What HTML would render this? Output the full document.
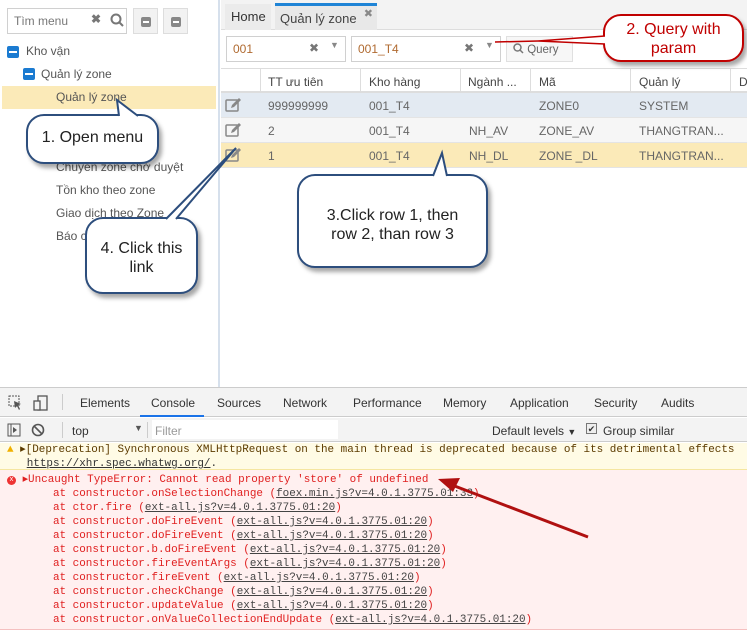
<!DOCTYPE html>
<html><head><meta charset="utf-8">
<style>
*{box-sizing:border-box;margin:0;padding:0}
body{width:747px;height:635px;overflow:hidden;background:#fff;font-family:"Liberation Sans",sans-serif;font-size:12px;color:#444;position:relative}
.abs{position:absolute}
.left{left:0;top:0;width:220px;height:387px;border-right:2px solid #d6e0ec;background:#fff}
.search{left:7px;top:8px;width:120px;height:26px;border:1px solid #d0d0d0;color:#777;padding:5px 6px;font-size:12px}
.sbtn{top:8px;width:25px;height:26px;border:1px solid #ddd;background:#f2f2f2}
.sbtn i{position:absolute;left:7px;top:8px;width:10px;height:10px;background:#888;border-radius:2px}
.sbtn i:after{content:"";position:absolute;left:2px;top:4px;width:6px;height:2px;background:#fff}
.tree{font-size:12px;color:#555}
.minus{width:12px;height:12px;background:#1b7bd1;border-radius:2px}
.minus:after{content:"";position:absolute;left:2px;top:5px;width:8px;height:2px;background:#fff}
.tabs{left:221px;top:0;width:526px;height:30px;background:#f3f3f3;border-bottom:1px solid #ddd}
.tb{left:221px;top:30px;width:526px;height:38px;background:#fff}
.combo{top:36px;height:26px;border:1px solid #d0d0d0;padding:5px 6px;color:#b06a30;font-size:12px}
.grid{left:221px;top:68px;width:526px}
.hdr{height:25px;border-top:1px solid #ddd;border-bottom:2px solid #ddd;position:relative;background:#fff}
.row{height:25px;position:relative;border-bottom:1px solid #e4e4e4;color:#666}
.c{position:absolute;top:6px;white-space:nowrap}
.hd{position:absolute;top:0;height:23px;border-left:1px solid #ddd}
.dev{left:0;top:387px;width:747px;height:248px;background:#fff;border-top:1px solid #ccc}
.mono{font-family:"Liberation Mono",monospace;font-size:10.95px;line-height:14px;white-space:pre}
.err{color:#e02020}
.lnk{text-decoration:underline;color:#444}
.call{position:absolute;background:#fff;border:2px solid #2d4e7d;border-radius:18px;box-shadow:3px 4px 4px rgba(0,0,0,.35);font-size:16px;color:#222;text-align:center}
</style></head><body>

<div class="abs left">
  <div class="abs search">Tìm menu<span style="position:absolute;left:83px;top:3px;color:#777;font-weight:bold">✖</span>
    <svg class="abs" style="left:102px;top:4px" width="14" height="14"><circle cx="6" cy="6" r="4.5" fill="none" stroke="#777" stroke-width="2"/><line x1="9" y1="9" x2="13" y2="13" stroke="#777" stroke-width="2"/></svg></div>
  <div class="abs sbtn" style="left:133px"><i></i></div>
  <div class="abs sbtn" style="left:163px"><i></i></div>
  <div class="abs minus" style="left:7px;top:46px"></div>
  <div class="abs tree" style="left:26px;top:44px">Kho vận</div>
  <div class="abs minus" style="left:23px;top:68px"></div>
  <div class="abs tree" style="left:41px;top:67px">Quản lý zone</div>
  <div class="abs" style="left:2px;top:86px;width:214px;height:23px;background:#fbeab8"></div>
  <div class="abs tree" style="left:56px;top:90px">Quản lý zone</div>
  <div class="abs tree" style="left:56px;top:160px">Chuyển zone chờ duyệt</div>
  <div class="abs tree" style="left:56px;top:183px">Tồn kho theo zone</div>
  <div class="abs tree" style="left:56px;top:206px">Giao dịch theo Zone</div>
  <div class="abs tree" style="left:56px;top:229px">Báo c</div>
</div>

<div class="abs tabs">
  <div class="abs" style="left:4px;top:4px;width:46px;height:26px;background:#ebebeb;padding:5px 6px;font-size:13px;color:#333">Home</div>
  <div class="abs" style="left:54px;top:3px;width:102px;height:27px;background:#e8e8e8;border-top:3px solid #1f84d6;padding:5px 5px;font-size:13px;color:#444">Quản lý zone<span style="position:absolute;right:4px;top:1px;color:#888;font-size:11px">✖</span></div>
</div>
<div class="abs tb"></div>
<div class="abs combo" style="left:226px;width:120px">001<span style="position:absolute;left:82px;top:4px;color:#777">✖</span><span style="position:absolute;left:103px;top:3px;color:#888;font-size:9px">▼</span></div>
<div class="abs combo" style="left:351px;width:150px">001_T4<span style="position:absolute;left:112px;top:4px;color:#777">✖</span><span style="position:absolute;left:133px;top:3px;color:#888;font-size:9px">▼</span></div>
<div class="abs" style="left:506px;top:36px;width:67px;height:26px;border:1px solid #e0e0e0;background:#f7f7f7;padding:6px 6px;color:#666;font-size:11.5px">
 <svg width="11" height="11" style="vertical-align:-1px"><circle cx="4.5" cy="4.5" r="3.5" fill="none" stroke="#777" stroke-width="1.5"/><line x1="7" y1="7" x2="10" y2="10" stroke="#777" stroke-width="1.5"/></svg> Query</div>

<div class="abs grid">
 <div class="hdr">
  <div class="hd" style="left:39px"></div><div class="hd" style="left:139px"></div><div class="hd" style="left:239px"></div><div class="hd" style="left:309px"></div><div class="hd" style="left:409px"></div><div class="hd" style="left:509px"></div>
  <span class="c" style="left:47px;color:#444">TT ưu tiên</span><span class="c" style="left:148px;color:#444">Kho hàng</span><span class="c" style="left:247px;color:#444">Ngành ...</span><span class="c" style="left:318px;color:#444">Mã</span><span class="c" style="left:418px;color:#444">Quản lý</span><span class="c" style="left:518px;color:#444">D</span>
 </div>
 <div class="row" style="background:#e3eaf2"><svg class="c" style="left:4px;top:4px" width="18" height="16"><rect x="1" y="3" width="12" height="11" rx="1" fill="none" stroke="#888" stroke-width="1.5"/><path d="M6 11 L7 8 L14 1 L16 3 L9 10Z" fill="#888"/></svg><span class="c" style="left:47px">999999999</span><span class="c" style="left:148px">001_T4</span><span class="c" style="left:318px">ZONE0</span><span class="c" style="left:418px">SYSTEM</span></div>
 <div class="row" style="background:#f6f6f6"><svg class="c" style="left:4px;top:4px" width="18" height="16"><rect x="1" y="3" width="12" height="11" rx="1" fill="none" stroke="#888" stroke-width="1.5"/><path d="M6 11 L7 8 L14 1 L16 3 L9 10Z" fill="#888"/></svg><span class="c" style="left:47px">2</span><span class="c" style="left:148px">001_T4</span><span class="c" style="left:248px">NH_AV</span><span class="c" style="left:318px">ZONE_AV</span><span class="c" style="left:418px">THANGTRAN...</span></div>
 <div class="row" style="background:#fbeab8"><svg class="c" style="left:4px;top:4px" width="18" height="16"><rect x="1" y="3" width="12" height="11" rx="1" fill="none" stroke="#888" stroke-width="1.5"/><path d="M6 11 L7 8 L14 1 L16 3 L9 10Z" fill="#888"/></svg><span class="c" style="left:47px">1</span><span class="c" style="left:148px">001_T4</span><span class="c" style="left:248px">NH_DL</span><span class="c" style="left:318px">ZONE _DL</span><span class="c" style="left:418px">THANGTRAN...</span></div>
</div>

<div class="abs dev">
 <div class="abs" style="left:0;top:0;width:747px;height:29px;background:#f3f3f3;border-bottom:1px solid #ccc;font-size:12px;color:#333">
  <svg class="abs" style="left:8px;top:7px" width="40" height="16"><rect x="1" y="1" width="10" height="10" fill="none" stroke="#555" stroke-dasharray="2,1"/><path d="M6 6 L13 9 L10 10 L12 14 L11 15 L9 11 L7 13Z" fill="#555"/><rect x="30" y="1" width="9" height="14" fill="none" stroke="#555" stroke-width="1.3"/><rect x="26" y="6" width="6" height="9" fill="#f3f3f3" stroke="#555" stroke-width="1.3"/></svg>
  <div class="abs" style="left:62px;top:6px;width:1px;height:16px;background:#ccc"></div>
  <span class="abs" style="left:80px;top:8px">Elements</span>
  <span class="abs" style="left:151px;top:8px">Console</span>
  <div class="abs" style="left:140px;top:27px;width:64px;height:2px;background:#1a73e8"></div>
  <span class="abs" style="left:217px;top:8px">Sources</span>
  <span class="abs" style="left:283px;top:8px">Network</span>
  <span class="abs" style="left:353px;top:8px">Performance</span>
  <span class="abs" style="left:443px;top:8px">Memory</span>
  <span class="abs" style="left:510px;top:8px">Application</span>
  <span class="abs" style="left:594px;top:8px">Security</span>
  <span class="abs" style="left:661px;top:8px">Audits</span>
 </div>
 <div class="abs" style="left:0;top:30px;width:747px;height:24px;background:#f3f3f3;border-bottom:1px solid #ccc;font-size:12px;color:#333">
  <svg class="abs" style="left:7px;top:5px" width="40" height="15"><rect x="1" y="1" width="12" height="12" fill="none" stroke="#555"/><line x1="4" y1="1" x2="4" y2="13" stroke="#555"/><path d="M6 4 L10 7 L6 10Z" fill="#555"/><circle cx="31" cy="7" r="5.5" fill="none" stroke="#555" stroke-width="1.6"/><line x1="27" y1="3" x2="35" y2="11" stroke="#555" stroke-width="1.6"/></svg>
  <div class="abs" style="left:62px;top:4px;width:1px;height:16px;background:#ccc"></div>
  <span class="abs" style="left:72px;top:6px">top</span><span class="abs" style="left:134px;top:5px;font-size:9px;color:#555">▼</span>
  <div class="abs" style="left:147px;top:4px;width:1px;height:16px;background:#ccc"></div>
  <div class="abs" style="left:152px;top:2px;width:186px;height:19px;background:#fff;padding:4px 3px;color:#999">Filter</div>
  <span class="abs" style="left:492px;top:6px">Default levels <span style="font-size:9px">▼</span></span>
  <span class="abs" style="left:586px;top:5px;width:11px;height:11px;border:1px solid #777;background:#eee;font-size:9px;line-height:10px;text-align:center">✔</span>
  <span class="abs" style="left:603px;top:6px">Group similar</span>
 </div>
 <div class="abs mono" style="left:0;top:55px;width:747px;height:27px;background:#fffbe5;border-bottom:1px solid #f5e6a0;color:#5c3b00;padding-left:7px"><span style="color:#f0b000">▲</span> ▸[Deprecation] Synchronous XMLHttpRequest on the main thread is deprecated because of its detrimental effects
   <span class="lnk" style="color:#333">https://xhr.spec.whatwg.org/</span><span style="color:#333">.</span></div>
 <div class="abs mono err" style="left:0;top:82px;width:747px;height:160px;background:#fff0f0;border-bottom:1px solid #f5c0c0;padding:3px 0 0 7px"><span style="display:inline-block;width:9px;height:9px;border-radius:50%;background:#e33;color:#fff;font-size:7px;line-height:9px;text-align:center;vertical-align:1px">x</span> ▸Uncaught TypeError: Cannot read property 'store' of undefined
       at constructor.onSelectionChange (<span class="lnk">foex.min.js?v=4.0.1.3775.01:33</span>)
       at ctor.fire (<span class="lnk">ext-all.js?v=4.0.1.3775.01:20</span>)
       at constructor.doFireEvent (<span class="lnk">ext-all.js?v=4.0.1.3775.01:20</span>)
       at constructor.doFireEvent (<span class="lnk">ext-all.js?v=4.0.1.3775.01:20</span>)
       at constructor.b.doFireEvent (<span class="lnk">ext-all.js?v=4.0.1.3775.01:20</span>)
       at constructor.fireEventArgs (<span class="lnk">ext-all.js?v=4.0.1.3775.01:20</span>)
       at constructor.fireEvent (<span class="lnk">ext-all.js?v=4.0.1.3775.01:20</span>)
       at constructor.checkChange (<span class="lnk">ext-all.js?v=4.0.1.3775.01:20</span>)
       at constructor.updateValue (<span class="lnk">ext-all.js?v=4.0.1.3775.01:20</span>)
       at constructor.onValueCollectionEndUpdate (<span class="lnk">ext-all.js?v=4.0.1.3775.01:20</span>)</div>
</div>

<div class="call" style="left:26px;top:114px;width:133px;height:50px;padding-top:13px">1. Open menu</div>
<div class="call" style="left:603px;top:14px;width:141px;height:48px;border-color:#c00000;color:#c00000;padding-top:4px;line-height:19px">2. Query with<br>param</div>
<div class="call" style="left:297px;top:174px;width:191px;height:94px;padding-top:30px;line-height:19px">3.Click row 1, then<br>row 2, than row 3</div>
<div class="call" style="left:85px;top:217px;width:113px;height:77px;padding-top:20px;line-height:19px">4. Click this<br>link</div>

<svg class="abs" style="left:0;top:0" width="747" height="635">
 <path d="M119 116 L117 100 L138 116" fill="#fff" stroke="#2d4e7d" stroke-width="2"/>
 <path d="M433 176 L442 153 L447 176" fill="#fff" stroke="#2d4e7d" stroke-width="2"/>
 <path d="M166 219 L236 148 L176 219" fill="#fff" stroke="#2d4e7d" stroke-width="2"/>
 <path d="M605 36 L538 41 L605 44" fill="#fff" stroke="#c00000" stroke-width="1.5"/>
 <line x1="538" y1="41" x2="495" y2="42" stroke="#c00000" stroke-width="1.5"/>
 <rect x="604" y="37" width="4" height="6" fill="#fff"/>
 <line x1="588" y1="537" x2="452" y2="485" stroke="#b01010" stroke-width="3"/>
 <path d="M438 479 L460 478 L453 492Z" fill="#b01010"/>
</svg>
</body></html>
